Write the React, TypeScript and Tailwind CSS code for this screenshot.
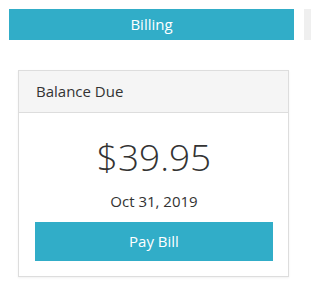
export default function App() {
  return (
    <div className="min-h-screen bg-white pt-[9px] font-['Open_Sans',sans-serif] text-[#333]">
      <div className="flex gap-[10px] pl-[9px]">
        <div className="flex h-[31px] w-[285px] shrink-0 items-center justify-center bg-[#31adc8] text-[15px] text-white">
          Billing
        </div>
        <div className="h-[31px] flex-1 bg-[#efefef]" />
      </div>

      <div className="ml-[18px] mt-[30px] w-[271px] border border-[#dddddd] bg-white shadow-[0_1px_2px_rgba(0,0,0,0.06)]">
        <div className="h-[42px] border-b border-[#dddddd] bg-[#f5f5f5] pl-[17px] pt-[10px] text-[15px] leading-[20px]">
          Balance Due
        </div>
        <div className="flex flex-col items-center pl-4 pr-[15px] pb-[15px] pt-[24px]">
          <div className="text-[37px] font-light leading-[40px] text-[#333]">$39.95</div>
          <div className="mt-[14px] text-[15px] leading-[20px]">Oct 31, 2019</div>
          <button className="mt-[11px] h-[39px] w-full bg-[#31adc8] text-[15px] text-white">
            Pay Bill
          </button>
        </div>
      </div>
    </div>
  )
}
